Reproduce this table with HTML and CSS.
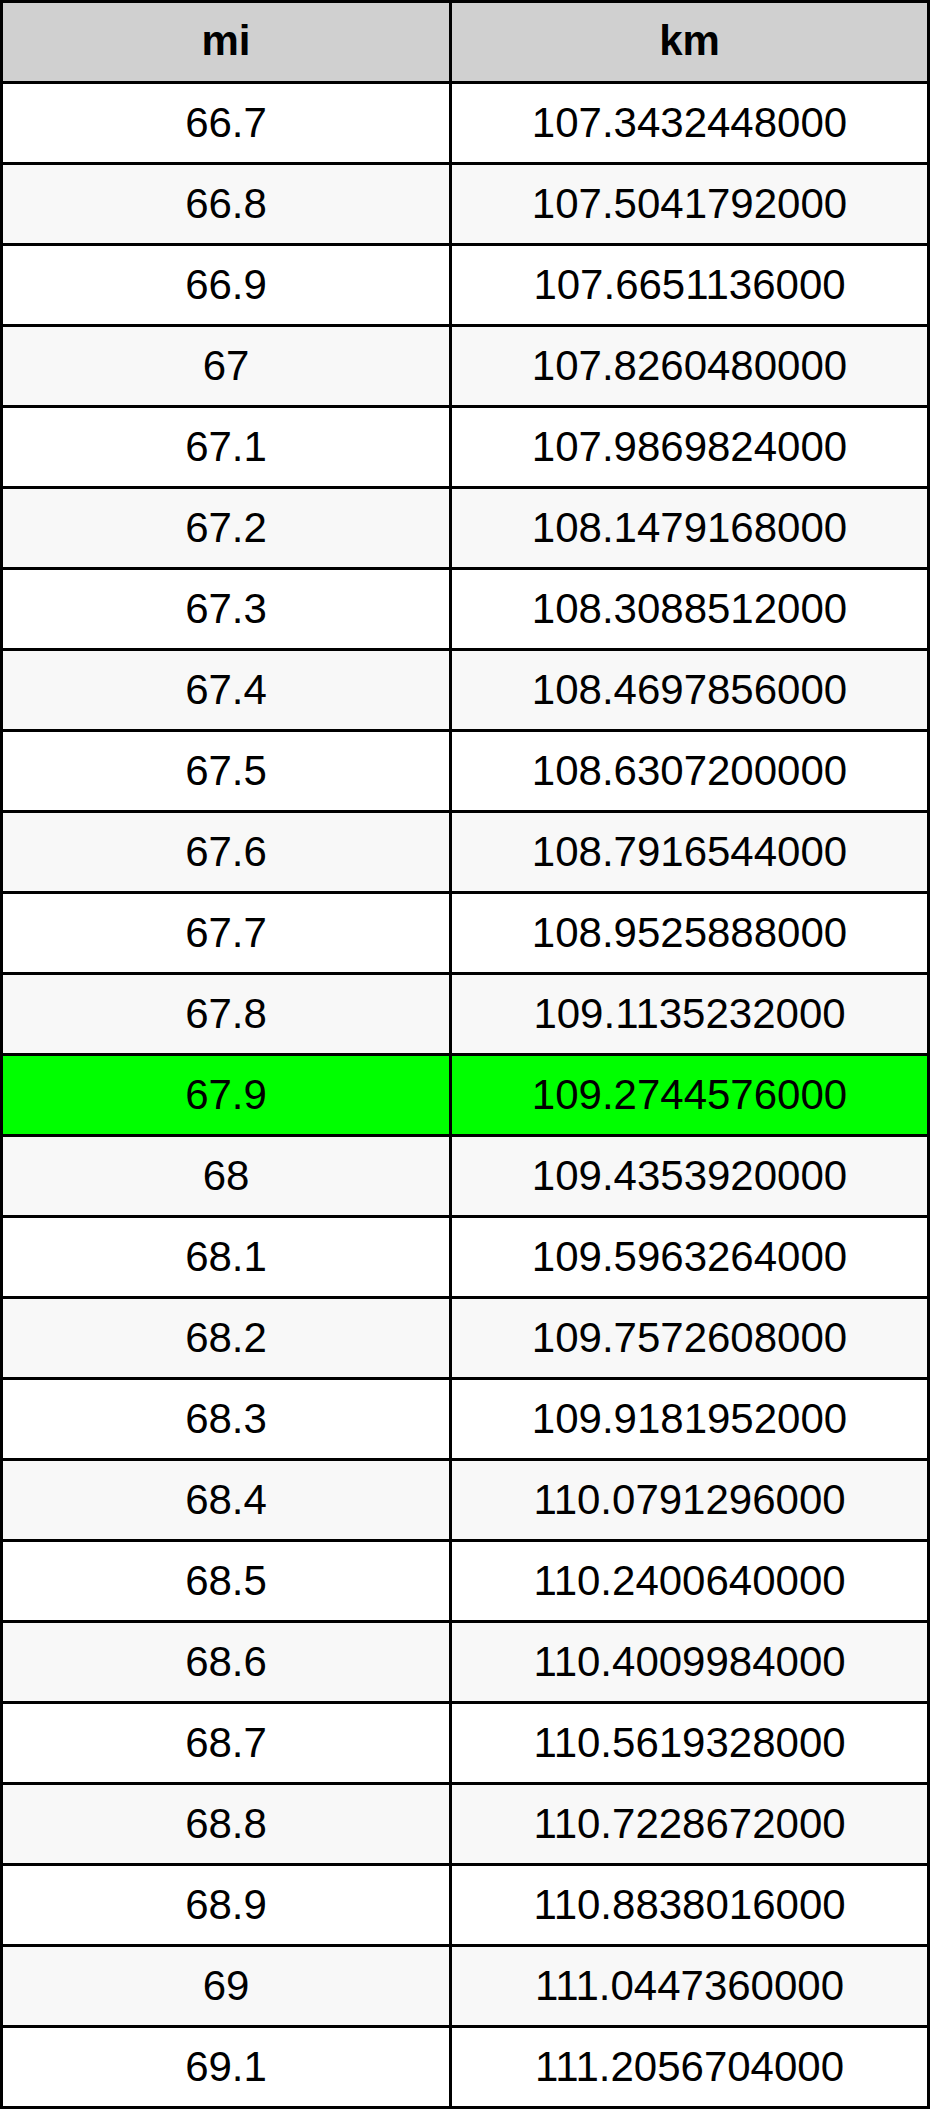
FILE: index.html
```html
<!DOCTYPE html>
<html lang="en">
<head>
<meta charset="utf-8">
<title>mi to km</title>
<link rel="stylesheet" href="styles.css">
</head>
<body>
<div class="conv-table">
  <div class="row head"><div class="cell c1">mi</div><div class="cell c2">km</div></div>
  <div class="row"><div class="cell c1">66.7</div><div class="cell c2">107.3432448000</div></div>
  <div class="row alt"><div class="cell c1">66.8</div><div class="cell c2">107.5041792000</div></div>
  <div class="row"><div class="cell c1">66.9</div><div class="cell c2">107.6651136000</div></div>
  <div class="row alt"><div class="cell c1">67</div><div class="cell c2">107.8260480000</div></div>
  <div class="row"><div class="cell c1">67.1</div><div class="cell c2">107.9869824000</div></div>
  <div class="row alt"><div class="cell c1">67.2</div><div class="cell c2">108.1479168000</div></div>
  <div class="row"><div class="cell c1">67.3</div><div class="cell c2">108.3088512000</div></div>
  <div class="row alt"><div class="cell c1">67.4</div><div class="cell c2">108.4697856000</div></div>
  <div class="row"><div class="cell c1">67.5</div><div class="cell c2">108.6307200000</div></div>
  <div class="row alt"><div class="cell c1">67.6</div><div class="cell c2">108.7916544000</div></div>
  <div class="row"><div class="cell c1">67.7</div><div class="cell c2">108.9525888000</div></div>
  <div class="row alt"><div class="cell c1">67.8</div><div class="cell c2">109.1135232000</div></div>
  <div class="row hl"><div class="cell c1">67.9</div><div class="cell c2">109.2744576000</div></div>
  <div class="row alt"><div class="cell c1">68</div><div class="cell c2">109.4353920000</div></div>
  <div class="row"><div class="cell c1">68.1</div><div class="cell c2">109.5963264000</div></div>
  <div class="row alt"><div class="cell c1">68.2</div><div class="cell c2">109.7572608000</div></div>
  <div class="row"><div class="cell c1">68.3</div><div class="cell c2">109.9181952000</div></div>
  <div class="row alt"><div class="cell c1">68.4</div><div class="cell c2">110.0791296000</div></div>
  <div class="row"><div class="cell c1">68.5</div><div class="cell c2">110.2400640000</div></div>
  <div class="row alt"><div class="cell c1">68.6</div><div class="cell c2">110.4009984000</div></div>
  <div class="row"><div class="cell c1">68.7</div><div class="cell c2">110.5619328000</div></div>
  <div class="row alt"><div class="cell c1">68.8</div><div class="cell c2">110.7228672000</div></div>
  <div class="row"><div class="cell c1">68.9</div><div class="cell c2">110.8838016000</div></div>
  <div class="row alt"><div class="cell c1">69</div><div class="cell c2">111.0447360000</div></div>
  <div class="row"><div class="cell c1">69.1</div><div class="cell c2">111.2056704000</div></div>
</div>
</body>
</html>
```
FILE: styles.css
```css
html, body {
  margin: 0;
  padding: 0;
  background: #ffffff;
}
.conv-table {
  width: 930px;
  display: flex;
  flex-direction: column;
  font-family: "Liberation Sans", Arial, sans-serif;
  font-size: 42px;
  color: #000000;
}
.row {
  display: grid;
  grid-template-columns: 452px 478px;
  height: 81px;
  background: #ffffff;
}
.row.alt {
  background: #f8f8f8;
}
.row.hl {
  background: #00ff00;
}
.row.head {
  height: 84px;
  background: #d0d0d0;
  font-weight: bold;
}
.cell {
  box-sizing: border-box;
  display: flex;
  align-items: center;
  justify-content: center;
  border-bottom: 3px solid #000000;
  border-right: 3px solid #000000;
  padding-bottom: 1px;
}
.cell.c1 {
  border-left: 3px solid #000000;
}
.head .cell {
  border-top: 3px solid #000000;
  padding-bottom: 2px;
}
```
